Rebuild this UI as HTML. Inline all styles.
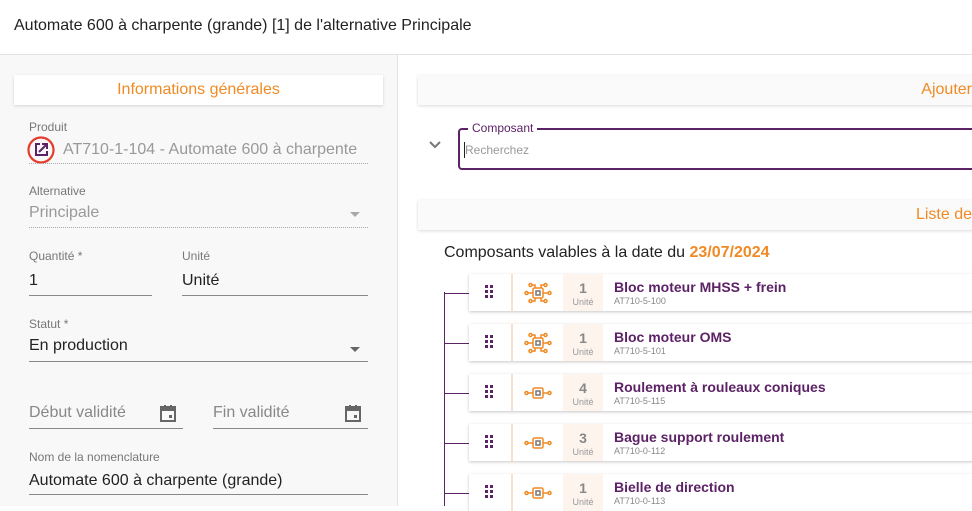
<!DOCTYPE html>
<html><head><meta charset="utf-8"><style>
*{box-sizing:border-box;margin:0;padding:0}
body{width:972px;height:506px;overflow:hidden;background:#fff;font-family:"Liberation Sans",Arial,sans-serif;position:relative;color:#222}
.a{position:absolute}
.lbl{font-size:12px;color:#777}
.val{font-size:16px;color:#222}
.hdr{background:#fff;box-shadow:0 1px 3px rgba(0,0,0,.15);color:#f08a24;font-size:16px;text-align:center;line-height:30px}
.card{position:absolute;left:469px;width:520px;height:37px;background:#fff;box-shadow:0 1px 3px rgba(0,0,0,.22)}
.card .sep{position:absolute;left:42px;top:0;width:2px;height:37px;background:#fae0cc}
.card .q{position:absolute;left:94px;top:0;width:40px;height:37px;background:#fdf4ee;text-align:center;color:#888}
.card .q b{display:block;font-size:14px;margin-top:6px}
.card .q i{display:block;font-style:normal;font-size:9px;color:#999;margin-top:1px}
.card .t{position:absolute;left:145px;top:5px;font-size:14px;font-weight:bold;color:#5c2266;white-space:nowrap}
.card .c{position:absolute;left:145px;top:22px;font-size:9px;color:#888}
.card .d{position:absolute;left:16px;top:11px}
.card svg.ic{position:absolute;left:54px;top:6px}
.br{position:absolute;left:444px;width:25px;height:1px;background:#5c2266}
</style></head><body>
<div class="a" style="left:14px;top:17px;font-size:16px;color:#222">Automate 600 à charpente (grande) [1] de l'alternative Principale</div>
<div class="a" style="left:0;top:54px;width:972px;height:1px;background:#e2e2e2"></div>
<div class="a" style="left:0;top:55px;width:398px;height:451px;background:#f8f8f8;border-right:1px solid #e2e2e2"></div>
<div class="a hdr" style="left:14px;top:75px;width:369px">Informations générales</div>

<div class="a lbl" style="left:29px;top:120px">Produit</div>
<svg class="a" style="left:26px;top:135px" width="30" height="30" viewBox="0 0 30 30"><circle cx="15" cy="15" r="12.5" fill="none" stroke="#e53b2c" stroke-width="2.2"/><path d="M14 9H10v11h11v-4M16 9h5v5M21 9l-8 8" fill="none" stroke="#5c2266" stroke-width="2"/></svg>
<div class="a" style="left:63px;top:141px;font-size:16px;color:#999">AT710-1-104 - Automate 600 à charpente</div>
<div class="a" style="left:29px;top:163px;width:339px;border-top:1px dotted #aaa"></div>

<div class="a lbl" style="left:29px;top:184px">Alternative</div>
<div class="a" style="left:29px;top:204px;font-size:16px;color:#999">Principale</div>
<div class="a" style="left:350px;top:212px;border:5px solid transparent;border-top-color:#aaa;border-bottom:0"></div>
<div class="a" style="left:29px;top:227px;width:339px;border-top:1px dotted #aaa"></div>

<div class="a lbl" style="left:29px;top:249px">Quantité *</div>
<div class="a val" style="left:29px;top:272px">1</div>
<div class="a" style="left:29px;top:295px;width:123px;height:1px;background:#888"></div>
<div class="a lbl" style="left:182px;top:249px">Unité</div>
<div class="a val" style="left:182px;top:272px">Unité</div>
<div class="a" style="left:182px;top:295px;width:186px;height:1px;background:#888"></div>

<div class="a lbl" style="left:29px;top:317px">Statut *</div>
<div class="a val" style="left:29px;top:337px">En production</div>
<div class="a" style="left:350px;top:347px;border:5px solid transparent;border-top-color:#666;border-bottom:0"></div>
<div class="a" style="left:29px;top:361px;width:339px;height:1px;background:#888"></div>

<div class="a" style="left:29px;top:404px;font-size:16px;color:#888">Début validité</div>
<svg class="a" style="left:158px;top:403px" width="20" height="20" viewBox="0 0 20 20"><path d="M3 4h14v14H3z" fill="none" stroke="#666" stroke-width="2"/><path d="M3 4h14v4H3z" fill="#666"/><rect x="6" y="2" width="2" height="3" fill="#666"/><rect x="12" y="2" width="2" height="3" fill="#666"/><rect x="11" y="12" width="3" height="3" fill="#666"/></svg>
<div class="a" style="left:29px;top:428px;width:154px;height:1px;background:#888"></div>
<div class="a" style="left:213px;top:404px;font-size:16px;color:#888">Fin validité</div>
<svg class="a" style="left:343px;top:403px" width="20" height="20" viewBox="0 0 20 20"><path d="M3 4h14v14H3z" fill="none" stroke="#666" stroke-width="2"/><path d="M3 4h14v4H3z" fill="#666"/><rect x="6" y="2" width="2" height="3" fill="#666"/><rect x="12" y="2" width="2" height="3" fill="#666"/><rect x="11" y="12" width="3" height="3" fill="#666"/></svg>
<div class="a" style="left:213px;top:428px;width:155px;height:1px;background:#888"></div>

<div class="a lbl" style="left:29px;top:450px">Nom de la nomenclature</div>
<div class="a val" style="left:29px;top:472px">Automate 600 à charpente (grande)</div>
<div class="a" style="left:29px;top:494px;width:339px;height:1px;background:#888"></div>

<div class="a hdr" style="left:418px;top:75px;width:600px;background:#fafafa;text-align:right;padding-right:46px">Ajouter</div>
<svg class="a" style="left:428px;top:140px" width="14" height="10" viewBox="0 0 14 10"><path d="M2 2l5 5 5-5" fill="none" stroke="#777" stroke-width="2"/></svg>
<div class="a" style="left:458px;top:128px;width:530px;height:42px;border:2px solid #5c2266;border-radius:4px"></div>
<div class="a" style="left:468px;top:121px;background:#fff;padding:0 4px;font-size:12px;color:#5c2266">Composant</div>
<div class="a" style="left:464px;top:142px;width:1px;height:16px;background:#222"></div>
<div class="a" style="left:465px;top:143px;font-size:12px;color:#999">Recherchez</div>

<div class="a hdr" style="left:418px;top:200px;width:600px;background:#fafafa;text-align:right;padding-right:46px">Liste de</div>
<div class="a" style="left:444px;top:244px;font-size:16px;color:#222">Composants valables à la date du <b style="color:#f08a24">23/07/2024</b></div>

<div class="a" style="left:444px;top:292px;width:1px;height:214px;background:#5c2266"></div>
<div class="br" style="top:293px"></div><div class="br" style="top:343px"></div><div class="br" style="top:393px"></div><div class="br" style="top:443px"></div><div class="br" style="top:493px"></div>

<svg width="0" height="0" style="position:absolute"><defs>
<g id="dots" fill="#5c2266"><rect x="0" y="0" width="3" height="3"/><rect x="5" y="0" width="3" height="3"/><rect x="0" y="5" width="3" height="3"/><rect x="5" y="5" width="3" height="3"/><rect x="0" y="10" width="3" height="3"/><rect x="5" y="10" width="3" height="3"/></g>
<g id="big" fill="none" stroke="#f08a24" stroke-width="1.5"><rect x="10" y="8" width="10" height="10" rx="1.5"/><rect x="13" y="11" width="4" height="4" stroke="#777"/><path d="M10 13H5M20 13h5M12 8V5H9M18 8V5h3M12 18v3H9M18 18v3h3"/><circle cx="3.5" cy="13" r="1.5"/><circle cx="26.5" cy="13" r="1.5"/><circle cx="7.5" cy="5" r="1.5"/><circle cx="22.5" cy="5" r="1.5"/><circle cx="7.5" cy="21" r="1.5"/><circle cx="22.5" cy="21" r="1.5"/></g>
<g id="sm" fill="none" stroke="#f08a24" stroke-width="1.5"><rect x="10" y="8" width="10" height="10" rx="1.5"/><rect x="13" y="11" width="4" height="4" stroke="#777"/><path d="M10 13H5M20 13h5"/><circle cx="3.5" cy="13" r="1.5"/><circle cx="26.5" cy="13" r="1.5"/></g>
</defs></svg>

<div class="card" style="top:274px"><svg class="d" width="8" height="13"><use href="#dots"/></svg><div class="sep"></div><svg class="ic" width="30" height="26"><use href="#big"/></svg><div class="q"><b>1</b><i>Unité</i></div><div class="t">Bloc moteur MHSS + frein</div><div class="c">AT710-5-100</div></div>
<div class="card" style="top:324px"><svg class="d" width="8" height="13"><use href="#dots"/></svg><div class="sep"></div><svg class="ic" width="30" height="26"><use href="#big"/></svg><div class="q"><b>1</b><i>Unité</i></div><div class="t">Bloc moteur OMS</div><div class="c">AT710-5-101</div></div>
<div class="card" style="top:374px"><svg class="d" width="8" height="13"><use href="#dots"/></svg><div class="sep"></div><svg class="ic" width="30" height="26"><use href="#sm"/></svg><div class="q"><b>4</b><i>Unité</i></div><div class="t">Roulement à rouleaux coniques</div><div class="c">AT710-5-115</div></div>
<div class="card" style="top:424px"><svg class="d" width="8" height="13"><use href="#dots"/></svg><div class="sep"></div><svg class="ic" width="30" height="26"><use href="#sm"/></svg><div class="q"><b>3</b><i>Unité</i></div><div class="t">Bague support roulement</div><div class="c">AT710-0-112</div></div>
<div class="card" style="top:474px"><svg class="d" width="8" height="13"><use href="#dots"/></svg><div class="sep"></div><svg class="ic" width="30" height="26"><use href="#sm"/></svg><div class="q"><b>1</b><i>Unité</i></div><div class="t">Bielle de direction</div><div class="c">AT710-0-113</div></div>
</body></html>
